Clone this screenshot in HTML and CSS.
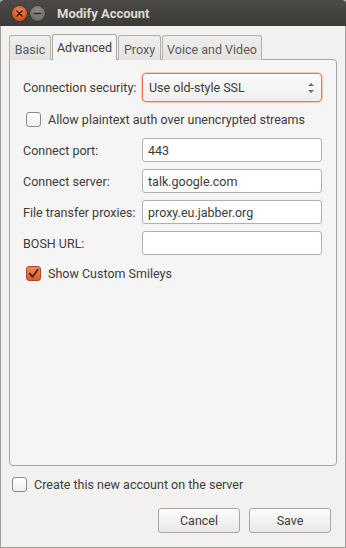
FILE: index.html
```html
<!DOCTYPE html>
<html>
<head>
<meta charset="utf-8">
<link rel="stylesheet" href="styles.css">
</head>
<body>
<div class="window">
  <div class="titlebar">
    <span class="wbtn close"><svg width="15" height="15" viewBox="0 0 15 15"><path d="M5 5 L10 10 M10 5 L5 10" stroke="#3a1a0c" stroke-width="1.6" stroke-linecap="round"/></svg></span>
    <span class="wbtn mini"><svg width="15" height="15" viewBox="0 0 15 15"><path d="M4.5 7.5 H10.5" stroke="#2e2e2c" stroke-width="1.6" stroke-linecap="round"/></svg></span>
    <span class="title">Modify Account</span>
  </div>
  <div class="content">
    <div class="tabs">
      <div class="tab t-basic">Basic</div>
      <div class="tab active t-adv">Advanced</div>
      <div class="tab t-proxy">Proxy</div>
      <div class="tab t-voice">Voice and Video</div>
    </div>
    <div class="panel">
      <div class="row row-combo">
        <span class="label">Connection security:</span>
        <div class="combo">
          <span>Use old-style SSL</span>
          <svg class="arrows" width="8" height="14" viewBox="0 0 8 14"><path d="M1 5 L4 2 L7 5 Z M1 9 L4 12 L7 9 Z" fill="#6e6e6e"/></svg>
        </div>
      </div>
      <div class="check-row first">
        <span class="cb"></span>
        <span>Allow plaintext auth over unencrypted streams</span>
      </div>
      <div class="fields">
        <div class="row"><span class="label">Connect port:</span><div class="entry">443</div></div>
        <div class="row"><span class="label">Connect server:</span><div class="entry">talk.google.com</div></div>
        <div class="row"><span class="label">File transfer proxies:</span><div class="entry">proxy.eu.jabber.org</div></div>
        <div class="row"><span class="label">BOSH URL:</span><div class="entry"></div></div>
      </div>
      <div class="check-row smileys">
        <span class="cb checked"><svg width="14" height="14" viewBox="0 0 14 14"><path d="M3 6.5 L6 10 L11.5 2.5" fill="none" stroke="#4a2313" stroke-width="2" stroke-linecap="round" stroke-linejoin="round"/></svg></span>
        <span>Show Custom Smileys</span>
      </div>
    </div>
    <div class="check-row create">
      <span class="cb"></span>
      <span>Create this new account on the server</span>
    </div>
    <div class="buttons">
      <div class="btn">Cancel</div>
      <div class="btn">Save</div>
    </div>
  </div>
</div>
</body>
</html>
```
FILE: styles.css
```css
* { box-sizing: border-box; }
html, body { margin: 0; padding: 0; }
body {
  width: 346px;
  height: 548px;
  background: #f2f1f0;
  font-family: Roboto, "Liberation Sans", sans-serif;
  font-size: 12.5px;
  color: #3c3c3c;
  overflow: hidden;
}
.window {
  width: 346px;
  height: 548px;
  display: flex;
  flex-direction: column;
  border-left: 1px solid #a19f9b;
  border-right: 1px solid #a19f9b;
  border-bottom: 1px solid #a19f9b;
}
.titlebar {
  height: 26px;
  margin: 0 -1px;
  background: linear-gradient(#4b4a46, #3c3b37);
  border-radius: 4px 4px 0 0;
  display: flex;
  align-items: center;
  padding-left: 12px;
}
.wbtn {
  width: 15px;
  height: 15px;
  border-radius: 50%;
  display: flex;
  margin-right: 3px;
}
.wbtn.close {
  background: radial-gradient(circle at 50% 35%, #f6895a, #e0531f 60%, #c7421a);
  box-shadow: 0 0 0 0.5px #2c2b28;
}
.wbtn.mini {
  background: radial-gradient(circle at 50% 35%, #8f8e89, #6d6c68 70%, #5c5b57);
  box-shadow: 0 0 0 0.5px #2c2b28;
}
.title {
  margin-left: 9px;
  color: #dfdbd2;
  font-weight: bold;
  font-size: 13px;
}
.content {
  flex: 1;
  padding: 8px 8px 14px 8px;
  display: flex;
  flex-direction: column;
}
.tabs {
  display: flex;
  align-items: flex-end;
  height: 26px;
  position: relative;
  z-index: 1;
  margin-bottom: -1px;
}
.tab {
  height: 25px;
  padding: 2px 0 0 0;
  border: 1px solid #b2b0ab;
  border-bottom: none;
  border-radius: 3px 3px 0 0;
  background: linear-gradient(#efeeec, #e4e3e1);
  color: #5a5a5a;
  display: flex;
  align-items: center;
  justify-content: center;
  margin-right: 1px;
  white-space: nowrap;
}
.tab.active {
  height: 26px;
  background: #f5f5f5;
  color: #3c3c3c;
  border-color: #a8a6a2;
  padding-top: 0;
}
.t-basic { width: 42px; }
.t-adv { width: 65px; }
.t-proxy { width: 43px; }
.t-voice { width: 100px; }
.panel {
  width: 328px;
  height: 407px;
  background: #f5f5f5;
  border: 1px solid #a8a6a2;
  border-radius: 0 4px 4px 4px;
  padding: 13px 14px 0 13px;
}
.row {
  display: flex;
  align-items: center;
  justify-content: space-between;
}
.label { white-space: nowrap; }
.combo {
  width: 180px;
  height: 29px;
  border: 1px solid #f07746;
  border-radius: 4px;
  background: linear-gradient(#fbfbfb, #eeeeee);
  box-shadow: 0 0 0 1px rgba(240, 119, 70, 0.35);
  display: flex;
  align-items: center;
  justify-content: space-between;
  padding: 0 6px 0 6px;
  color: #3c3c3c;
}
.arrows { display: block; }
.check-row {
  display: flex;
  align-items: center;
  gap: 7px;
}
.check-row.first { margin: 9px 0 0 3px; height: 16px; }
.cb {
  width: 15px;
  height: 15px;
  border: 1px solid #8d8a86;
  border-radius: 3px;
  background: linear-gradient(#ffffff, #f0f0f0);
  flex: none;
  display: flex;
}
.cb.checked {
  background: linear-gradient(#f28a5c, #e0592a);
  border-color: #a84a22;
}
.fields {
  display: flex;
  flex-direction: column;
  gap: 7px;
  margin-top: 11px;
}
.entry {
  width: 180px;
  height: 24px;
  border: 1px solid #b3b0ab;
  border-radius: 3px;
  background: #ffffff;
  display: flex;
  align-items: center;
  padding: 0 5px;
  color: #3c3c3c;
}
.check-row.smileys { margin: 10px 0 0 3px; height: 16px; }
.check-row.create { margin: 10px 0 0 3px; height: 16px; }
.buttons {
  display: flex;
  justify-content: flex-end;
  gap: 9px;
  margin-top: auto;
  padding-right: 6px;
}
.btn {
  width: 82px;
  height: 25px;
  border: 1px solid #aaa7a2;
  border-radius: 3px;
  background: linear-gradient(#fdfdfd, #e9e8e6);
  display: flex;
  align-items: center;
  justify-content: center;
  color: #3c3c3c;
}
```
